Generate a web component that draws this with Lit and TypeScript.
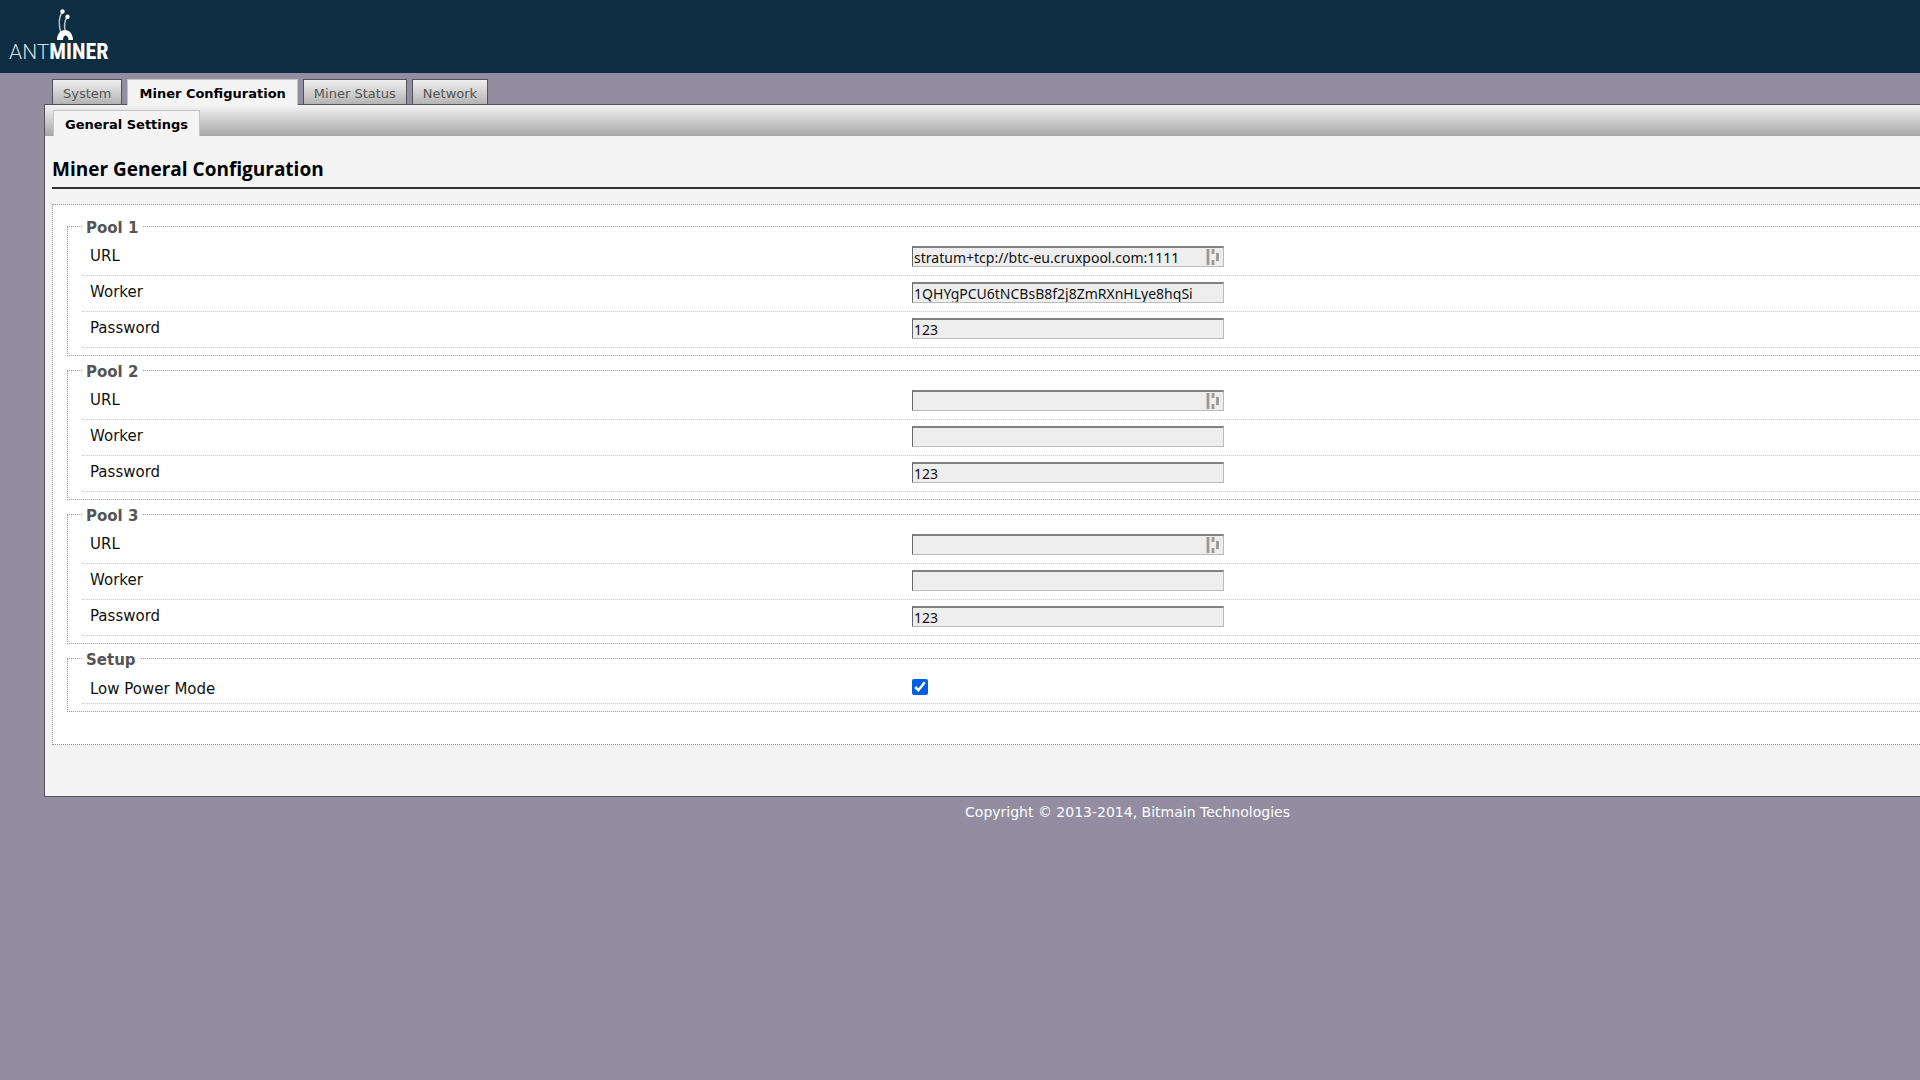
import { LitElement, html, css, svg, nothing } from "lit";
import { customElement, property } from "lit/decorators.js";

interface Field {
  label: string;
  value: string;
  helper?: boolean;
}

interface Pool {
  name: string;
  fields: Field[];
}

const pools: Pool[] = [
  {
    name: "Pool 1",
    fields: [
      { label: "URL", value: "stratum+tcp://btc-eu.cruxpool.com:1111", helper: true },
      { label: "Worker", value: "1QHYgPCU6tNCBsB8f2j8ZmRXnHLye8hqSi" },
      { label: "Password", value: "123" },
    ],
  },
  {
    name: "Pool 2",
    fields: [
      { label: "URL", value: "", helper: true },
      { label: "Worker", value: "" },
      { label: "Password", value: "123" },
    ],
  },
  {
    name: "Pool 3",
    fields: [
      { label: "URL", value: "", helper: true },
      { label: "Worker", value: "" },
      { label: "Password", value: "123" },
    ],
  },
];

@customElement("miner-header")
class MinerHeader extends LitElement {
  static styles = css`
    :host {
      display: block;
      background: #0c2d42;
      height: 73px;
    }
    .logo {
      display: inline-flex;
      flex-direction: column;
      padding: 8px 0 0 9px;
      color: #fff;
      text-decoration: none;
    }
    .ant {
      display: block;
      width: 18px;
      height: 32px;
      margin-left: 47px;
    }
    .word {
      display: flex;
      align-items: baseline;
      font-family: "Roboto Condensed", Roboto, sans-serif;
      font-size: 22px;
      line-height: 24px;
    }
    .thin {
      font-family: Roboto, sans-serif;
      font-size: 21px;
      font-weight: 300;
      color: #d5dce1;
    }
    .bold {
      font-weight: 700;
    }
  `;

  render() {
    return html`
      <a class="logo" href="#">
        ${svg`<svg class="ant" viewBox="0 0 18 32" aria-hidden="true">
          <path d="M5 25C2.500 17 2.500 10 6 4M9.500 24C8 19 8 14 11 9" fill="none" stroke="#b9c5cd" stroke-width="1.5"/>
          <circle cx="6.500" cy="3.500" r="2.200" fill="#fff"/>
          <circle cx="11.500" cy="8.800" r="2.200" fill="#fff"/>
          <path d="M1 32C1 26 4.500 22 9 22s8 4 8 10h-4.500c0-2.500-1.500-4.500-3-4.500S7 29.500 7 32z" fill="#fff"/>
        </svg>`}
        <span class="word"><span class="thin">ANT</span><span class="bold">MINER</span></span>
      </a>
    `;
  }
}

@customElement("config-field")
class ConfigField extends LitElement {
  @property() label = "";
  @property() value = "";
  @property({ type: Boolean }) helper = false;

  static styles = css`
    :host {
      display: block;
    }
    .row {
      display: grid;
      grid-template-columns: 45% 1fr;
      column-gap: 3px;
      align-items: start;
      box-sizing: border-box;
      height: 36px;
      padding-top: 6px;
      border-bottom: 1px dotted #ccc;
    }
    .label {
      padding-left: 8px;
      font-size: 15px;
      line-height: 20px;
      color: #111;
    }
    .box {
      display: flex;
      align-items: center;
      box-sizing: border-box;
      width: 312px;
      height: 21px;
      background: #eee;
      border: 1px solid #bbb;
      border-top: 2px solid #808080;
      border-left-color: #666;
    }
    .input {
      flex: 1;
      min-width: 0;
      height: 18px;
      padding: 0 0 0 1px;
      border: 0;
      outline: 0;
      background: none;
      color: #111;
      font-family: "Noto Sans", sans-serif;
      font-size: 14px;
    }
    .helper {
      width: 14px;
      height: 18px;
      margin-right: 3px;
    }
  `;

  render() {
    return html`
      <div class="row">
        <label class="label" for="value">${this.label}</label>
        <div class="box">
          <input class="input" id="value" type="text" .value=${this.value} />
          ${this.helper
            ? svg`<svg class="helper" viewBox="0 0 14 18" aria-hidden="true">
                <path d="M2 1v16M7 1v5M7 12v5M11.500 5v8" stroke="#9a9694" stroke-width="2.8" fill="none"/>
              </svg>`
            : nothing}
        </div>
      </div>
    `;
  }
}

@customElement("app-root")
class AppRoot extends LitElement {
  static styles = css`
    :host {
      display: block;
      min-height: 100vh;
      overflow: hidden;
      background: #928da0;
      font-family: "DejaVu Sans", sans-serif;
    }
    .tabs {
      display: flex;
      gap: 5px;
      padding: 6px 0 0 52px;
    }
    .tab {
      box-sizing: border-box;
      height: 25px;
      padding: 0 10px;
      border: 1px solid #55535a;
      border-bottom: 0;
      background: linear-gradient(#f0f0f0, #b4b4b4);
      color: #555;
      font-size: 13px;
      line-height: 28px;
      text-decoration: none;
      white-space: nowrap;
    }
    .tab.active {
      height: 26px;
      margin-bottom: -1px;
      padding: 0 11px;
      border-color: #c4c4c4;
      background: #f4f4f4;
      color: #000;
      font-weight: 700;
    }
    .main {
      margin-left: 44px;
      border: solid #55535a;
      border-width: 1px 0 1px 1px;
      background: #f4f4f4;
    }
    .subtabs {
      display: flex;
      height: 31px;
      padding-left: 8px;
      align-items: flex-end;
      background: linear-gradient(#f4f4f4, #a6a6a6);
    }
    .subtabs .tab.active {
      margin-bottom: 0;
    }
    .content {
      padding: 20px 0 51px 7px;
    }
    .title {
      margin: 0 0 15px;
      padding-bottom: 5px;
      border-bottom: 2px solid #333;
      color: #000;
      font-family: "Trebuchet MS", "Open Sans", sans-serif;
      font-size: 19px;
      font-weight: 700;
      line-height: 26px;
    }
    .form {
      padding: 13px 0 26px 14px;
      border: dotted #999;
      border-width: 1px 0 1px 1px;
      background: #fff;
    }
    .group {
      min-width: 0;
      margin: 0 0 6px;
      padding: 6px 0 7px 14px;
      border: 1px dotted #999;
      border-right: 0;
    }
    .legend {
      height: 16px;
      margin: 0;
      padding: 0 4px;
      color: #555;
      font-size: 15px;
      font-weight: 700;
      line-height: 20px;
    }
    .check-row {
      display: grid;
      grid-template-columns: 45% 1fr;
      column-gap: 3px;
      align-items: start;
      box-sizing: border-box;
      height: 32px;
      padding-top: 7px;
      border-bottom: 1px dotted #ccc;
    }
    .check-label {
      padding-left: 8px;
      font-size: 15px;
      line-height: 20px;
      color: #111;
    }
    .check {
      width: 16px;
      height: 16px;
      margin: 0;
      accent-color: #005fe0;
    }
    .footer {
      padding: 5px 0 0 335px;
      color: #fff;
      font-size: 14px;
      line-height: 20px;
      text-align: center;
    }
  `;

  render() {
    return html`
      <miner-header></miner-header>
      <nav class="tabs">
        <a class="tab" href="#">System</a>
        <a class="tab active" href="#">Miner Configuration</a>
        <a class="tab" href="#">Miner Status</a>
        <a class="tab" href="#">Network</a>
      </nav>
      <main class="main">
        <nav class="subtabs">
          <a class="tab active" href="#">General Settings</a>
        </nav>
        <div class="content">
          <h1 class="title">Miner General Configuration</h1>
          <form class="form">
            ${pools.map(
              (pool) => html`
                <fieldset class="group">
                  <legend class="legend">${pool.name}</legend>
                  ${pool.fields.map(
                    (field) => html`<config-field
                      .label=${field.label}
                      .value=${field.value}
                      .helper=${field.helper ?? false}
                    ></config-field>`
                  )}
                </fieldset>
              `
            )}
            <fieldset class="group">
              <legend class="legend">Setup</legend>
              <div class="check-row">
                <label class="check-label" for="low-power">Low Power Mode</label>
                <input class="check" id="low-power" type="checkbox" checked />
              </div>
            </fieldset>
          </form>
        </div>
      </main>
      <footer class="footer">Copyright © 2013-2014, Bitmain Technologies</footer>
    `;
  }
}
